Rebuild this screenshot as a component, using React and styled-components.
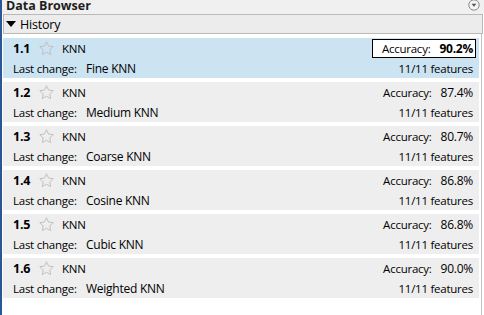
import React from "react";
import styled, { createGlobalStyle } from "styled-components";

const GlobalStyle = createGlobalStyle`
  html, body {
    margin: 0;
    padding: 0;
    background: #ffffff;
  }
  body {
    font-family: "Open Sans", "Noto Sans", sans-serif;
    color: #000;
  }
  * {
    box-sizing: border-box;
  }
`;

const Panel = styled.div`
  width: 484px;
  height: 315px;
  border-left: 2px solid #2b5797;
  background: #ffffff;
  display: flex;
  flex-direction: column;
  overflow: hidden;
`;

const TitleBar = styled.div`
  height: 14px;
  flex: none;
  background: #f0f0f0;
  display: flex;
  align-items: flex-end;
  justify-content: space-between;
  padding: 0 4px 0 4px;
  overflow: hidden;
`;

const Title = styled.span`
  font-weight: 700;
  font-size: 12.5px;
  line-height: 13px;
  color: #1e1e1e;
  margin-bottom: 2px;
`;

const MenuIcon = styled.svg`
  width: 12px;
  height: 12px;
  margin-bottom: 3px;
`;

const Header = styled.div`
  flex: none;
  height: 20px;
  margin-left: 1px;
  margin-right: 1px;
  border: 1px solid #b9b9b9;
  background: #ececec;
  display: flex;
  align-items: center;
  gap: 4px;
  padding-left: 2px;
  font-size: 12.5px;
  letter-spacing: -0.2px;
`;

const Caret = styled.span`
  width: 0;
  height: 0;
  border-left: 5px solid transparent;
  border-right: 5px solid transparent;
  border-top: 6px solid #000;
`;

const List = styled.div`
  flex: 1;
  display: flex;
  flex-direction: column;
  gap: 4px;
  padding-top: 4px;
  margin-left: 1px;
  margin-right: 2px;
  padding-right: 2px;
  border-right: 1px solid #c4c4c4;
`;

const Row = styled.div`
  height: 40px;
  padding: 1px 6px 0 10px;
  background: ${(p) => (p.$selected ? "#cce3f2" : "#eeeeee")};
  display: grid;
  grid-template-columns: 1fr auto;
  grid-template-rows: 19px 20px;
  font-size: 11.5px;
  letter-spacing: -0.25px;
`;

const Left = styled.div`
  display: flex;
  align-items: center;
`;

const Num = styled.span`
  font-weight: 700;
  font-size: 12.5px;
  width: 25px;
`;

const Star = styled.svg`
  width: 17px;
  height: 17px;
  margin-right: 7px;
`;

const Label = styled.span`
  width: 73px;
`;

const Value = styled.span`
  font-size: 12px;
`;

const AccBox = styled.div`
  justify-self: end;
  display: flex;
  align-items: center;
  border: 1px solid ${(p) => (p.$selected ? "#000" : "transparent")};
  background: ${(p) => (p.$selected ? "#ffffff" : "transparent")};
  padding: 0 2px 0 9px;
  margin-right: -3px;
  gap: 9px;
`;

const AccValue = styled.span`
  font-size: 12px;
  font-weight: ${(p) => (p.$selected ? 700 : 400)};
`;

const Features = styled.div`
  justify-self: end;
  display: flex;
  align-items: center;
`;

const rows = [
  { id: "1.1", change: "Fine KNN", acc: "90.2%", selected: true },
  { id: "1.2", change: "Medium KNN", acc: "87.4%" },
  { id: "1.3", change: "Coarse KNN", acc: "80.7%" },
  { id: "1.4", change: "Cosine KNN", acc: "86.8%" },
  { id: "1.5", change: "Cubic KNN", acc: "86.8%" },
  { id: "1.6", change: "Weighted KNN", acc: "90.0%" },
];

const StarIcon = () => (
  <Star viewBox="0 0 24 24">
    <path
      d="M12 2.5l2.9 6.1 6.6.8-4.9 4.6 1.3 6.6L12 17.3l-5.9 3.3 1.3-6.6-4.9-4.6 6.6-.8z"
      fill="none"
      stroke="#bdbdbd"
      strokeWidth="1.3"
      strokeLinejoin="round"
    />
  </Star>
);

export default function App() {
  return (
    <>
      <GlobalStyle />
      <Panel>
        <TitleBar>
          <Title>Data Browser</Title>
          <MenuIcon viewBox="0 0 12 12">
            <circle cx="6" cy="6" r="5.2" fill="#f4f4f4" stroke="#8a8a8a" strokeWidth="1" />
            <path d="M3.6 4.8h4.8L6 7.8z" fill="#555" />
          </MenuIcon>
        </TitleBar>
        <Header>
          <Caret />
          <span>History</span>
        </Header>
        <List>
          {rows.map((r) => (
            <Row key={r.id} $selected={r.selected}>
              <Left>
                <Num>{r.id}</Num>
                <StarIcon />
                <span>KNN</span>
              </Left>
              <AccBox $selected={r.selected}>
                <span>Accuracy:</span>
                <AccValue $selected={r.selected}>{r.acc}</AccValue>
              </AccBox>
              <Left>
                <Label>Last change:</Label>
                <Value>{r.change}</Value>
              </Left>
              <Features>11/11 features</Features>
            </Row>
          ))}
        </List>
      </Panel>
    </>
  );
}
